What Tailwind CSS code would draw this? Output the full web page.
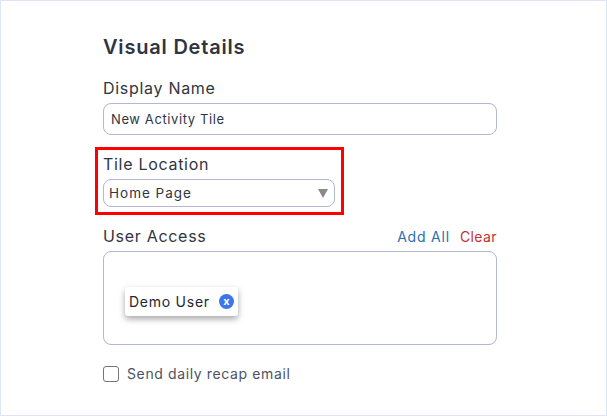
<!DOCTYPE html>
<html>
<head>
<meta charset="utf-8">
<script src="https://cdn.jsdelivr.net/npm/@tailwindcss/browser@4"></script>
</head>
<body class="bg-white">
<div class="w-[607px] h-[416px] overflow-hidden border border-[#dfe5f6] pl-[102px] pt-[34px] font-['Inter',sans-serif] text-[#2f3542]">
  <h2 class="text-[20px] leading-[24px] font-semibold tracking-[0.8px]">Visual Details</h2>

  <div class="mt-[19px] text-[16px] leading-[20px] tracking-[0.7px]">Display Name</div>
  <input type="text" value="New Activity Tile" class="mt-[5px] block w-[394px] h-[32px] rounded-[8px] border border-[#b0b9d3] px-[7px] text-[13px] tracking-[0.6px] text-[#2f3542]">

  <div class="mt-[12px] w-[249px] h-[68px] -ml-[8px] border-[3px] border-[#ff0000] pl-[5px] pt-[4px]">
    <div class="text-[16px] leading-[20px] tracking-[0.7px]">Tile Location</div>
    <div class="mt-[5px] flex items-center justify-between w-[232px] h-[28px] rounded-[8px] border border-[#b0b9d3] pl-[5px] pr-[6px] text-[13.5px] tracking-[1px]">
      <span>Home Page</span>
      <svg width="10" height="9" viewBox="0 0 10 9"><path d="M0 0H10L5 9Z" fill="#8a8a8a"/></svg>
    </div>
  </div>

  <div class="mt-[11px] flex items-center justify-between w-[394px] h-[20px]">
    <span class="text-[16px] leading-[20px] tracking-[0.7px]">User Access</span>
    <span class="flex gap-[10px] text-[14px]">
      <a class="text-[#2a70ad] tracking-[0.8px]">Add All</a>
      <a class="text-[#c5302e] tracking-[0.4px]">Clear</a>
    </span>
  </div>
  <div class="mt-[5px] w-[394px] h-[94px] rounded-[8px] border border-[#b0b9d3] pl-[21px] pt-[35px]">
    <div class="inline-flex items-center w-[113px] h-[29px] rounded-[3px] bg-white pl-[4px] shadow-[0_3px_6px_rgba(0,0,0,0.35)] text-[14px] tracking-[0.75px] text-[#222733]">
      <span>Demo User</span>
      <span class="ml-auto mr-[4px] flex items-center justify-center w-[15px] h-[15px] rounded-full bg-[#3b76ea] text-white text-[11px] font-bold leading-none tracking-normal">x</span>
    </div>
  </div>

  <label class="mt-[18px] flex items-center gap-[8px] text-[14px] tracking-[0.62px] text-[#4b5263]">
    <span class="block w-[16px] h-[16px] rounded-[3px] border border-[#767676] bg-white"></span>
    <span>Send daily recap email</span>
  </label>
</div>
</body>
</html>
